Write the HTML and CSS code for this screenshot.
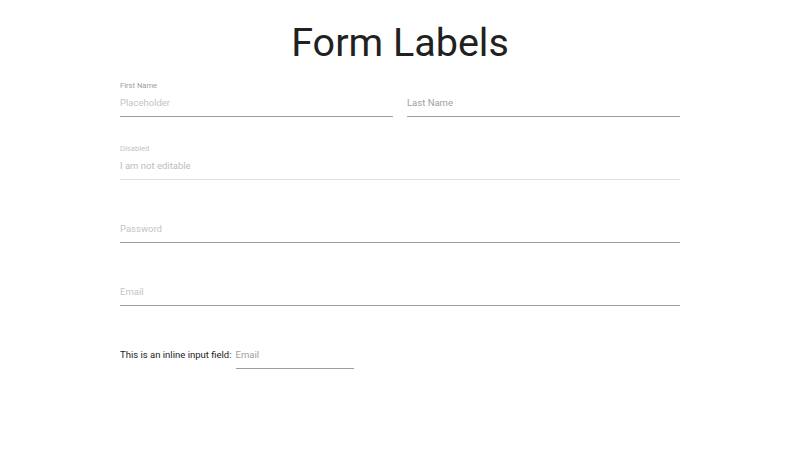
FILE: index.html
```html
<!DOCTYPE html>
<html>
<head>
<meta charset="utf-8">
<link rel="stylesheet" href="styles.css">
</head>
<body>
<div class="container">
  <h1 class="title">Form Labels</h1>
  <div class="row two">
    <div class="field">
      <label class="label active">First Name</label>
      <input class="input" type="text" placeholder="Placeholder">
    </div>
    <div class="field">
      <input class="input" type="text" placeholder="Last Name">
    </div>
  </div>
  <div class="row">
    <div class="field disabled">
      <label class="label active">Disabled</label>
      <input class="input" type="text" value="I am not editable" disabled>
    </div>
  </div>
  <div class="row">
    <div class="field">
      <input class="input" type="password" placeholder="Password">
    </div>
  </div>
  <div class="row">
    <div class="field">
      <input class="input" type="email" placeholder="Email">
    </div>
  </div>
  <div class="row inline">
    <span class="inline-text">This is an inline input field:</span>
    <div class="field small">
      <input class="input" type="email" placeholder="Email">
    </div>
  </div>
</div>
</body>
</html>
```
FILE: styles.css
```css
* { box-sizing: border-box; }
html, body { margin: 0; padding: 0; background: #fff; }
body {
  font-family: Roboto, "Noto Sans", sans-serif;
  color: rgba(0,0,0,0.87);
}
.container {
  width: 560px;
  margin: 0 auto;
}
.title {
  margin: 18px 0 5px;
  font-size: 39.5px;
  line-height: 50px;
  font-weight: 400;
  text-align: center;
  color: #212121;
}
.row {
  margin-bottom: 19px;
}
.row.two {
  display: grid;
  grid-template-columns: 1fr 1fr;
  column-gap: 14px;
}
.field {
  position: relative;
  padding-top: 15px;
}
.label {
  position: absolute;
  left: 0;
  top: 8px;
  font-size: 7.6px;
  line-height: 10px;
  color: #9e9e9e;
}
.input {
  display: block;
  width: 100%;
  height: 29px;
  margin: 0;
  padding: 0;
  border: none;
  border-bottom: 1px solid #9e9e9e;
  background: transparent;
  font-family: Roboto, "Noto Sans", sans-serif;
  font-size: 9.5px;
  color: rgba(0,0,0,0.87);
  outline: none;
}
.input::placeholder { color: #9e9e9e; }
.field:first-child .input::placeholder { color: #c4c4c4; }
.row.two .field:last-child .input::placeholder { color: #9e9e9e; }
.disabled .label { color: #c4c4c4; }
.disabled .input {
  color: #bdbdbd;
  border-bottom: 1px solid #e0e0e0;
}
.row.inline {
  display: flex;
  align-items: flex-end;
}
.inline-text {
  font-size: 9.5px;
  line-height: 29px;
  padding-bottom: 0;
  color: #212121;
  margin-right: 4px;
}
.field.small {
  width: 118px;
}
```
